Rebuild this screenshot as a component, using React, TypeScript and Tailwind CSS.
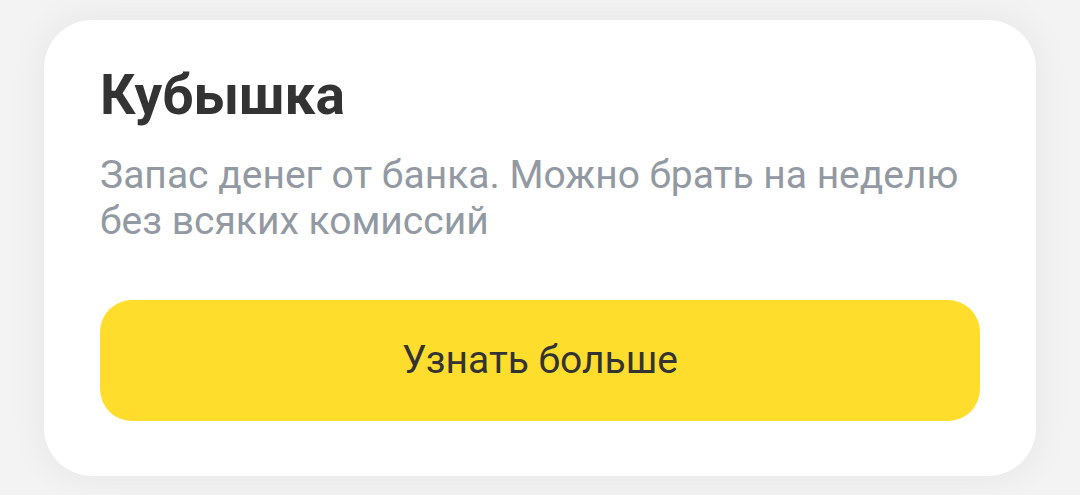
export default function App() {
  return (
    <div className="min-h-[495px] w-full bg-[#f3f3f3] px-[44px] pt-[20px] font-['Roboto',sans-serif]">
      <div className="flex flex-col rounded-[48px] bg-white px-[56px] pt-[43px] pb-[55px] shadow-[0_0_40px_rgba(0,0,0,0.06)]">
        <h2 className="text-[55px] leading-[64px] font-bold text-[#333333]">Кубышка</h2>
        <p className="mt-[25px] text-[39px] leading-[46px] text-[#9299a2]">
          Запас денег от банка. Можно брать на неделю
          <br />
          без всяких комиссий
        </p>
        <button className="mt-[56px] h-[121px] w-full rounded-[32px] bg-[#ffdd2d] text-[39px] text-[#333333]">
          Узнать больше
        </button>
      </div>
    </div>
  );
}
